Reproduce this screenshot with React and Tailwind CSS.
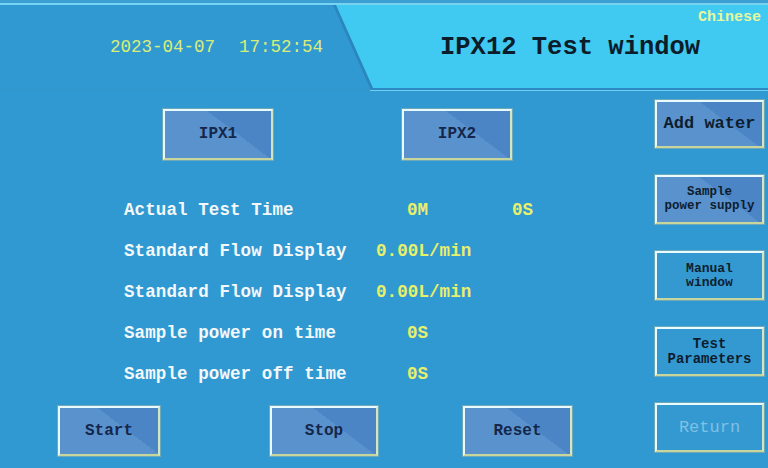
import React from "react";

const mono = "font-['Liberation_Mono','DejaVu_Sans_Mono',monospace]";

function PanelButton({ children, className = "", filled = true, textClass = "" }) {
  const fill = filled
    ? "bg-[linear-gradient(37deg,#5a92cd_62%,#4b85c6_62%)]"
    : "bg-[#3499d1]";
  return (
    <div
      className={`flex items-center justify-center text-center border-2 border-t-[#e9fbff] border-l-[#e9fbff] border-r-[#d3e6c4] border-b-[#c8d69c] shadow-[0_0_0_1px_#6fa8b8] ${fill} ${className}`}
    >
      <span className={`${mono} font-bold leading-[1.05] ${textClass}`}>{children}</span>
    </div>
  );
}

function DataRow({ label, children }) {
  return (
    <div className="grid grid-cols-[252px_136px_auto] items-center h-[41px]">
      <span className="text-[#f3f8fa] text-[17.5px] font-bold">{label}</span>
      {children}
    </div>
  );
}

export default function App() {
  return (
    <div className={`w-[768px] h-[468px] bg-[#3199d1] overflow-hidden flex flex-col ${mono}`}>
      {/* header strip */}
      <div className="h-[3px] bg-[#3c9fd3]" />
      <div className="h-[2px] bg-[#78d2f2]" />
      <div className="h-[83px] flex">
        <div className="w-[333px] flex items-center pl-[110px] pt-[2px] gap-[24px] text-[#d9ee7a] text-[17.5px]">
          <span>2023-04-07</span>
          <span>17:52:54</span>
        </div>
        <div className="flex-1 bg-[#2a86bd] [clip-path:polygon(0_0,100%_0,100%_100%,37px_100%)]">
          <div className="h-full bg-[#40c9f1] [clip-path:polygon(3px_0,100%_0,100%_100%,40px_100%)] flex flex-col">
            <div className="flex justify-end pr-[7px] pt-[5px] h-[24px]">
              <span className="text-[#e6f99c] text-[15px] font-bold leading-none">Chinese</span>
            </div>
            <div className="flex-1 flex items-start pl-[107px] pt-[6px]">
              <span className="text-[#0b1c2a] text-[25.5px] font-bold leading-none">IPX12 Test window</span>
            </div>
          </div>
        </div>
      </div>
      <div className="h-[3px] flex">
        <div className="w-[370px] bg-[#3097cf]" />
        <div className="flex-1 flex flex-col">
          <div className="h-[2px] bg-[#2b8ac3]" />
          <div className="h-[1px] bg-[#70cdef]" />
        </div>
      </div>

      {/* body */}
      <div className="flex-1 flex">
        <div className="flex-1 flex flex-col">
          <div className="flex pt-[18px] pl-[163px] gap-[129px]">
            <PanelButton className="w-[110px] h-[51px]" textClass="text-[16px] text-[#14274a]">IPX1</PanelButton>
            <PanelButton className="w-[110px] h-[51px]" textClass="text-[16px] text-[#14274a]">IPX2</PanelButton>
          </div>

          <div className="flex flex-col pl-[124px] mt-[30px] tracking-[0.1px]">
            <DataRow label="Actual Test Time">
              <span className="pl-[31px] text-[#e9f06a] text-[17.5px] font-bold">0M</span>
              <span className="text-[#e9f06a] text-[17.5px] font-bold">0S</span>
            </DataRow>
            <DataRow label="Standard Flow Display">
              <span className="text-[#e9f06a] text-[17.5px] font-bold whitespace-nowrap">0.00L/min</span>
            </DataRow>
            <DataRow label="Standard Flow Display">
              <span className="text-[#e9f06a] text-[17.5px] font-bold whitespace-nowrap">0.00L/min</span>
            </DataRow>
            <DataRow label="Sample power on time">
              <span className="pl-[31px] text-[#e9f06a] text-[17.5px] font-bold">0S</span>
            </DataRow>
            <DataRow label="Sample power off time">
              <span className="pl-[31px] text-[#e9f06a] text-[17.5px] font-bold">0S</span>
            </DataRow>
          </div>

          <div className="flex mt-[11px]">
            <PanelButton className="ml-[58px] w-[102px] h-[50px]" textClass="text-[16px] text-[#14274a]">Start</PanelButton>
            <PanelButton className="ml-[110px] w-[108px] h-[50px]" textClass="text-[16px] text-[#14274a]">Stop</PanelButton>
            <PanelButton className="ml-[85px] w-[109px] h-[50px]" textClass="text-[16px] text-[#14274a]">Reset</PanelButton>
          </div>
        </div>

        <div className="w-[113px] pr-[4px] pt-[9px] flex flex-col gap-[27px]">
          <PanelButton className="w-[109px] h-[48px]" textClass="text-[17px] text-[#0e1d2e]">Add water</PanelButton>
          <PanelButton className="w-[109px] h-[49px]" textClass="text-[12.5px] text-[#0e1d2e]">
            Sample<br />power supply
          </PanelButton>
          <PanelButton filled={false} className="w-[109px] h-[49px]" textClass="text-[13px] text-[#0e1d2e]">
            Manual<br />window
          </PanelButton>
          <PanelButton filled={false} className="w-[109px] h-[49px]" textClass="text-[14px] text-[#0e1d2e]">
            Test<br />Parameters
          </PanelButton>
          <PanelButton filled={false} className="w-[109px] h-[49px]" textClass="text-[17px] font-normal text-[#7fc0e4]">
            Return
          </PanelButton>
        </div>
      </div>
    </div>
  );
}
